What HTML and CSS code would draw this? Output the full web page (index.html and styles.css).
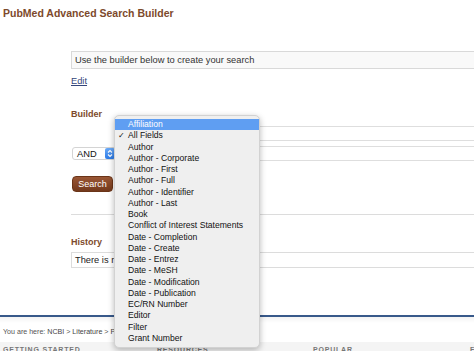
FILE: index.html
```html
<!DOCTYPE html>
<html lang="en">
  <head>
    <meta charset="utf-8" />
    <title>Advanced search - PubMed</title>
    <link rel="stylesheet" href="styles.css">
  </head>
  <body>
    <h1 class="page-title">PubMed Advanced Search Builder</h1>
    <div class="main">
      <div class="query-box">Use the builder below to create your search</div>
      <a class="edit" href="#">Edit</a>

      <h2 class="section">Builder</h2>
      <div class="builder-row first">
        <div class="field-select"></div>
        <div class="term"></div>
      </div>
      <div class="builder-row">
        <div class="op-select">
          <span>AND</span>
          <span class="stepper">
            <svg width="6" height="9" viewBox="0 0 6 9">
              <path d="M1 3.5 L3 1.5 L5 3.5 M1 5.5 L3 7.5 L5 5.5" fill="none" stroke="#fff" stroke-width="1.1" />
            </svg>
          </span>
        </div>
        <div class="field-select"></div>
        <div class="term"></div>
      </div>
      <button class="search-btn">Search</button>

      <hr class="divider" />

      <h2 class="section history-title">History</h2>
      <div class="history-box">There is no recent history</div>
    </div>

    <footer class="footer">
      <div class="breadcrumb">
        You are here: <a href="#">NCBI</a> &gt; <a href="#">Literature</a> &gt; <a href="#">PubMed</a>
      </div>
      <div class="footer-links">
        <span>Getting started</span>
        <span>Resources</span>
        <span>Popular</span>
        <span>Featured</span>
      </div>
    </footer>

    <ul class="field-menu">
      <li class="active">Affiliation</li>
      <li class="checked">All Fields</li>
      <li>Author</li>
      <li>Author - Corporate</li>
      <li>Author - First</li>
      <li>Author - Full</li>
      <li>Author - Identifier</li>
      <li>Author - Last</li>
      <li>Book</li>
      <li>Conflict of Interest Statements</li>
      <li>Date - Completion</li>
      <li>Date - Create</li>
      <li>Date - Entrez</li>
      <li>Date - MeSH</li>
      <li>Date - Modification</li>
      <li>Date - Publication</li>
      <li>EC/RN Number</li>
      <li>Editor</li>
      <li>Filter</li>
      <li>Grant Number</li>
    </ul>
  </body>
</html>
```

FILE: styles.css
```css
html,
body {
  height: 100%;
  margin: 0;
  padding: 0;
}

body {
  background-color: white;
  color: #222;
  font-family: "Liberation Sans", Arial, sans-serif;
  overflow: hidden;
  position: relative;
}

.page-title {
  margin: 0;
  padding: 7px 0 0 3px;
  font-size: 10.5px;
  line-height: 13px;
  font-weight: bold;
  color: #7d4a2c;
}

.main {
  margin-left: 71px;
  width: 403px;
}

.query-box {
  margin-top: 31px;
  height: 16px;
  border: 1px solid #d9d9d9;
  border-right: 0;
  background-color: #f9f9f9;
  padding: 0 3px;
  font-size: 9.3px;
  line-height: 16px;
  color: #333;
}

.edit {
  display: block;
  margin-top: 7px;
  width: 16px;
  font-size: 9.3px;
  line-height: 11px;
  color: #34457a;
}

.section {
  margin: 22px 0 0;
  font-size: 9px;
  line-height: 11px;
  font-weight: bold;
  color: #7d4a2c;
}

.builder-row {
  display: flex;
  align-items: center;
  gap: 3px;
  height: 15px;
  margin-top: 5px;
}

.builder-row.first {
  margin-top: 6px;
  padding-left: 44px;
}

.field-select {
  width: 120px;
  height: 13px;
}

.term {
  flex: 1;
  height: 13px;
  border: 1px solid #dedede;
  border-right: 0;
  background-color: white;
}

.op-select {
  display: flex;
  align-items: center;
  justify-content: space-between;
  width: 38px;
  height: 11px;
  margin-left: 1px;
  padding-left: 4px;
  border: 1px solid #d4d4d4;
  border-radius: 3px;
  background-color: white;
  font-size: 9.3px;
  color: #111;
}

.stepper {
  display: flex;
  align-items: center;
  justify-content: center;
  width: 10px;
  height: 11px;
  border-radius: 2px;
  background: linear-gradient(#6aaaf8, #2c7ae6);
}

.search-btn {
  display: block;
  margin: 15px 0 0 1px;
  width: 41px;
  height: 16px;
  padding: 0;
  border: 1px solid #6a3418;
  border-radius: 4px;
  background: linear-gradient(#9a5634, #73391c);
  color: white;
  font-family: "Liberation Sans", Arial, sans-serif;
  font-size: 9px;
}

.divider {
  margin: 22px 0 0;
  border: 0;
  border-top: 1px solid #dcdcdc;
}

.history-title {
  margin-top: 22px;
}

.history-box {
  margin-top: 4px;
  height: 14px;
  border: 1px solid #dcdcdc;
  border-right: 0;
  padding: 0 3px;
  font-size: 9.3px;
  line-height: 14px;
  color: #222;
  white-space: nowrap;
  overflow: hidden;
}

.footer {
  margin-top: 47px;
  border-top: 2px solid #38598a;
}

.breadcrumb {
  padding: 11px 0 0 3px;
  height: 14px;
  font-size: 7.1px;
  line-height: 9px;
  color: #555;
  white-space: nowrap;
  background: linear-gradient(#f3f3f3, white 6px);
}

.breadcrumb a {
  color: #444;
  text-decoration: none;
}

.footer-links {
  display: grid;
  grid-template-columns: 154px 156px 157px 1fr;
  padding: 4px 0 0 3px;
  background-color: #f4f4f4;
  font-size: 7px;
  font-weight: bold;
  letter-spacing: 0.8px;
  text-transform: uppercase;
  color: #777;
  white-space: nowrap;
  overflow: hidden;
}

.field-menu {
  position: absolute;
  left: 114px;
  top: 115px;
  width: 144px;
  margin: 0;
  padding: 3px 0;
  list-style: none;
  background-color: #efefef;
  border: 1px solid #d2d2d2;
  border-radius: 5px;
  box-shadow: 0 2px 6px rgba(0, 0, 0, 0.28);
}

.field-menu li {
  position: relative;
  height: 11.26px;
  line-height: 11.26px;
  padding-left: 13px;
  font-size: 8.6px;
  color: #111;
  white-space: nowrap;
}

.field-menu li.active {
  background-color: #5f9ef2;
  color: white;
}

.field-menu li.checked::before {
  content: "\2713";
  position: absolute;
  left: 3px;
  font-size: 8px;
}
```
